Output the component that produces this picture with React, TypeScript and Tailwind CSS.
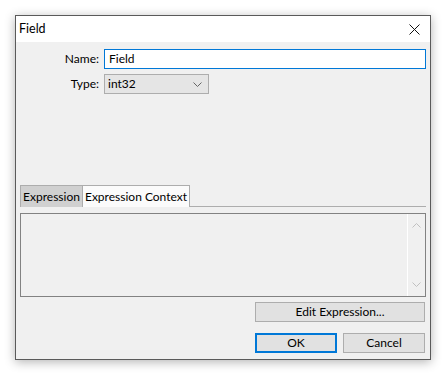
import React from 'react'

const font = { fontFamily: 'Lato, "Noto Sans", sans-serif' }

const ChevronDown = ({ className }: { className?: string }) => (
    <svg width="9" height="5" viewBox="0 0 9 5" className={className}>
        <path d="M0.5 0.5 L4.5 4.5 L8.5 0.5" fill="none" stroke="currentColor" strokeWidth="1" />
    </svg>
)

const ChevronUp = ({ className }: { className?: string }) => (
    <svg width="9" height="5" viewBox="0 0 9 5" className={className}>
        <path d="M0.5 4.5 L4.5 0.5 L8.5 4.5" fill="none" stroke="currentColor" strokeWidth="1" />
    </svg>
)

const Button = ({ label, primary }: { label: string, primary?: boolean }) => (
    <button
        className={
            primary
                ? "block h-[20px] w-full bg-[#e1e1e1] border-2 border-[#0078d7] text-[12px] text-black leading-none"
                : "block h-[20px] w-full bg-[#e1e1e1] border border-[#adadad] text-[12px] text-black leading-none"
        }
    >
        {label}
    </button>
)

const App = () => {
    return (
        <div className="w-[446px] h-[375px] bg-white pt-[15px] pl-[15px]" style={font}>
            <div className="w-[416px] h-[345px] border border-[#5a5a5a] bg-[#f0f0f0] flex flex-col shadow-[0_2px_10px_rgba(0,0,0,0.3)]">
                {/* title bar */}
                <div className="h-[26px] bg-white flex items-center justify-between pl-[3px] pr-[10px] shrink-0">
                    <span className="text-[12.5px] text-black">Field</span>
                    <svg width="11" height="11" viewBox="0 0 11 11">
                        <path d="M0.5 0.5 L10.5 10.5 M10.5 0.5 L0.5 10.5" stroke="#111" strokeWidth="1" />
                    </svg>
                </div>

                <div className="flex-1 flex flex-col px-[4px]">
                    {/* fields */}
                    <div className="mt-[7px] flex items-center h-[20px]">
                        <div className="w-[84px] text-right text-[12px] text-black pr-[5px]">Name:</div>
                        <div className="flex-1 h-[20px] bg-white border border-[#0078d7] flex items-center px-[4px] text-[12px] text-black">Field</div>
                    </div>
                    <div className="mt-[5px] flex items-center h-[20px]">
                        <div className="w-[84px] text-right text-[12px] text-black pr-[5px]">Type:</div>
                        <div className="w-[105px] h-[20px] bg-[#e5e5e5] border border-[#adadad] flex items-center justify-between pl-[3px] pr-[6px] text-[12px] text-black">
                            <span>int32</span>
                            <ChevronDown className="text-[#666]" />
                        </div>
                    </div>

                    {/* tabs */}
                    <div className="mt-[91px] flex items-start h-[22px] border-b border-[#adadad]">
                        <div className="h-[22px] w-[63px] flex items-center justify-center whitespace-nowrap bg-[#d0d0d0] border border-b-0 border-[#adadad] text-[12px] text-black">Expression</div>
                        <div className="h-[22px] w-[107px] flex items-center justify-center whitespace-nowrap bg-[#fbfbfb] border border-l-0 border-b-0 border-[#adadad] text-[12px] text-black">Expression Context</div>
                    </div>

                    {/* expression box */}
                    <div className="mt-[6px] h-[84px] border border-[#828282] flex">
                        <div className="flex-1 bg-[#f0f0f0]"></div>
                        <div className="w-[18px] border-l border-white flex flex-col items-center justify-between py-[9px] text-[#c0c0c0]">
                            <ChevronUp />
                            <ChevronDown />
                        </div>
                    </div>

                    {/* buttons */}
                    <div className="mt-[5px] flex justify-end pr-[1px]">
                        <div className="w-[170px]">
                            <Button label="Edit Expression..." />
                        </div>
                    </div>
                    <div className="mt-[11px] flex justify-end gap-[6px] pr-[1px]">
                        <div className="w-[82px]">
                            <Button label="OK" primary />
                        </div>
                        <div className="w-[82px]">
                            <Button label="Cancel" />
                        </div>
                    </div>
                </div>
            </div>
        </div>
    )
}

export default App
